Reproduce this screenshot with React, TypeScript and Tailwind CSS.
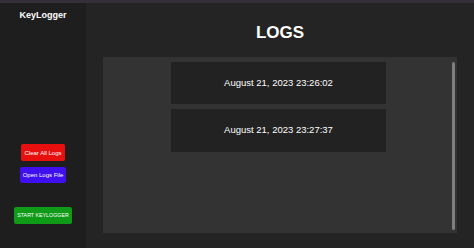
import React from "react";

const logs = ["August 21, 2023 23:26:02", "August 21, 2023 23:27:37"];

export default function App() {
  return (
    <div
      className="w-[474px] h-[248px] flex flex-col overflow-hidden text-white"
      style={{ fontFamily: '"Liberation Sans", Arial, sans-serif' }}
    >
      <div className="h-[3px] bg-[#342f3b] shrink-0" />
      <div className="flex flex-1 min-h-0">
        <aside className="w-[86px] bg-[#1e1e1e] flex flex-col items-center pt-[7px]">
          <div className="text-[9px] leading-[11px] font-bold">KeyLogger</div>
          <button className="mt-[123px] h-[17px] px-[3px] rounded-[2px] bg-[#e8100f] text-[6px] leading-none text-white">
            Clear All Logs
          </button>
          <button className="mt-[6px] h-[16px] px-[3px] rounded-[2px] bg-[#3f0fef] text-[6px] leading-none text-white">
            Open Logs File
          </button>
          <button className="mt-[24px] h-[17px] px-[3.5px] rounded-[2px] bg-[#0f9a17] text-[5.3px] leading-none text-white">
            START KEYLOGGER
          </button>
        </aside>
        <main className="flex-1 bg-[#242424] flex flex-col px-[17px] pt-[20px] pb-[15px]">
          <h1 className="text-center text-[17px] leading-[20px] font-bold">LOGS</h1>
          <div className="mt-[14px] flex-1 bg-[#333333] flex pl-[2px] pr-[2px] pt-[5px] pb-[3px]">
            <div className="flex-1 flex flex-col items-center gap-[5px]">
              {logs.map((l, i) => (
                <div
                  key={l}
                  className={`w-[215px] ${i === 0 ? "h-[42px]" : "h-[43px]"} bg-[#222222] flex items-center justify-center text-[9.5px]`}
                >
                  {l}
                </div>
              ))}
            </div>
            <div className="w-[3px] bg-[#7e7e7e] rounded-full" />
          </div>
        </main>
      </div>
    </div>
  );
}
